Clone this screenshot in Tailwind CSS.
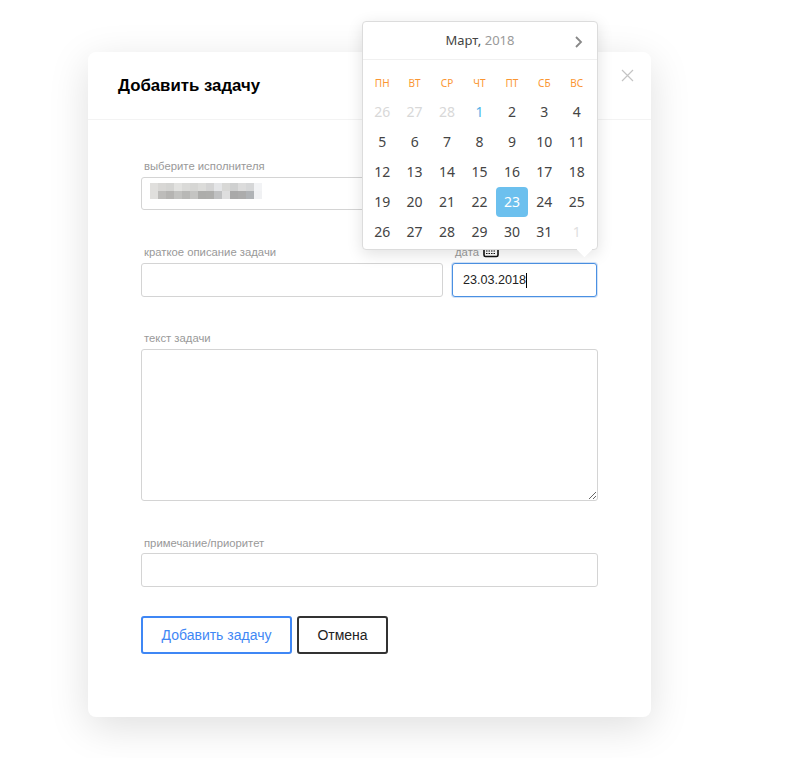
<!DOCTYPE html>
<html lang="ru">
<head>
<meta charset="utf-8">
<title>Добавить задачу</title>
<script src="https://cdn.jsdelivr.net/npm/@tailwindcss/browser@4"></script>
</head>
<body class="bg-white font-['Liberation_Sans',sans-serif]">
<div class="relative w-[808px] h-[758px] overflow-hidden pt-[52px] pl-[88px]">

  <!-- modal -->
  <div class="relative w-[563px] h-[665px] bg-white rounded-lg shadow-[0_10px_40px_rgba(0,0,0,0.13)]">
    <div class="h-[68px] border-b border-[#f3f3f3] pl-[30px] pt-[22px]">
      <h2 class="text-[16.8px] leading-[24px] font-bold text-black">Добавить задачу</h2>
    </div>
    <svg class="absolute left-[533px] top-[17px] w-[13px] h-[13px]" viewBox="0 0 13 13" fill="none" stroke="#c4c4c4" stroke-width="1.2"><path d="M1 1l11 11M12 1L1 12"/></svg>

    <div class="pl-[53px] w-[510px]">
      <!-- исполнитель -->
      <label class="block pt-[39px] pl-[3px] text-[11.3px] leading-[14px] text-[#999]">выберите исполнителя</label>
      <div class="mt-[4px] h-[33px] border border-[#d4d4d4] rounded-[3px] bg-white pl-[8px] pt-[5px]">
        <div class="blur-[0.6px]">
          <div class="flex h-[8px] w-[116px]">
            <i class="w-[8px] bg-[#e0dfdd]"></i><i class="w-[8px] bg-[#d8d7d5]"></i><i class="w-[8px] bg-[#d4d4d2]"></i><i class="w-[8px] bg-[#e2e2e0]"></i><i class="w-[8px] bg-[#dadad8]"></i><i class="w-[8px] bg-[#d6d6d4]"></i><i class="w-[8px] bg-[#dcdcda]"></i><i class="w-[8px] bg-[#d4d4d4]"></i><i class="w-[8px] bg-[#e4e5e7]"></i><i class="w-[8px] bg-[#d8d8d6]"></i><i class="w-[8px] bg-[#cfd0d0]"></i><i class="w-[8px] bg-[#dcdcdc]"></i><i class="w-[8px] bg-[#d6d7d8]"></i><i class="w-[8px] bg-[#f2f3f5]"></i>
          </div>
          <div class="flex h-[8px] w-[116px]">
            <i class="w-[8px] bg-[#e0dfdd]"></i><i class="w-[8px] bg-[#bdbcba]"></i><i class="w-[8px] bg-[#b5b4b2]"></i><i class="w-[8px] bg-[#c2c2c0]"></i><i class="w-[8px] bg-[#b8b8b6]"></i><i class="w-[8px] bg-[#c4c4c2]"></i><i class="w-[8px] bg-[#adadab]"></i><i class="w-[8px] bg-[#aeaeac]"></i><i class="w-[8px] bg-[#c0c1c2]"></i><i class="w-[8px] bg-[#dedede]"></i><i class="w-[8px] bg-[#a9a9a9]"></i><i class="w-[8px] bg-[#acacac]"></i><i class="w-[8px] bg-[#b0b3b6]"></i><i class="w-[8px] bg-[#f0f1f3]"></i>
          </div>
        </div>
      </div>

      <!-- описание + дата -->
      <div class="flex gap-[9px] mt-[35px]">
        <div class="w-[302px]">
          <label class="block pl-[3px] text-[11.3px] leading-[14px] text-[#999]">краткое описание задачи</label>
          <div class="mt-[4px] h-[34px] border border-[#d4d4d4] rounded-[3px] bg-white"></div>
        </div>
        <div class="w-[145px]">
          <label class="flex items-center gap-[4px] pl-[3px] text-[11.3px] leading-[14px] text-[#999]">дата
            <svg class="w-[16px] h-[12px]" viewBox="0 0 16 12" fill="none" stroke="#111"><rect x="1" y="1.5" width="14" height="9" rx="1.5" stroke-width="1.6"/><path d="M3 5h10M3 7.5h10" stroke-width="1.2" stroke-dasharray="1.5 1"/></svg>
          </label>
          <div class="mt-[4px] h-[34px] border border-[#4a90e2] rounded-[3px] bg-white shadow-[0_0_0_1px_rgba(74,144,226,0.25)] pl-[10px] flex items-center text-[12.6px] text-[#222]">23.03.2018<span class="w-px h-[15px] bg-black"></span></div>
        </div>
      </div>

      <!-- текст -->
      <label class="block mt-[34px] pl-[3px] text-[11.3px] leading-[14px] text-[#999]">текст задачи</label>
      <textarea class="block mt-[4px] w-[457px] h-[152px] border border-[#d4d4d4] rounded-[3px] bg-white outline-none"></textarea>

      <!-- примечание -->
      <label class="block mt-[35px] pl-[3px] text-[11.3px] leading-[14px] text-[#999]">примечание/приоритет</label>
      <div class="mt-[3px] w-[457px] h-[34px] border border-[#d4d4d4] rounded-[3px] bg-white"></div>

      <div class="flex gap-[5px] mt-[29px]">
        <button class="w-[151px] h-[38px] border-2 border-[#3f87f5] rounded-[3px] text-[14px] text-[#3f87f5]">Добавить задачу</button>
        <button class="w-[91px] h-[38px] border-2 border-[#333] rounded-[3px] text-[14px] text-[#222]">Отмена</button>
      </div>
    </div>
  </div>

  <!-- calendar popover -->
  <div class="absolute left-[362px] top-[21px] w-[236px] h-[229px] bg-white border border-[#dcdcdc] rounded-[4px] shadow-[0_4px_16px_rgba(0,0,0,0.12)] font-['Noto_Sans',sans-serif]">
    <div class="relative h-[38px] border-b border-[#f0f0f0] flex items-center justify-center text-[13px] text-[#444] pt-[1px]">
      <span>Март, <span class="text-[#999]">2018</span></span>
      <svg class="absolute right-[14px] top-[14px] w-[9px] h-[12px]" viewBox="0 0 9 12" fill="none" stroke="#888" stroke-width="1.8"><path d="M2 1l5 5-5 5"/></svg>
    </div>
    <div class="grid grid-cols-7 w-[227px] ml-[3px] mt-[8px] text-center">
      <span class="h-[29px] leading-[30px] text-[10px] text-[#fb9632]">ПН</span>
      <span class="h-[29px] leading-[30px] text-[10px] text-[#fb9632]">ВТ</span>
      <span class="h-[29px] leading-[30px] text-[10px] text-[#fb9632]">СР</span>
      <span class="h-[29px] leading-[30px] text-[10px] text-[#fb9632]">ЧТ</span>
      <span class="h-[29px] leading-[30px] text-[10px] text-[#fb9632]">ПТ</span>
      <span class="h-[29px] leading-[30px] text-[10px] text-[#fb9632]">СБ</span>
      <span class="h-[29px] leading-[30px] text-[10px] text-[#fb9632]">ВС</span>
    </div>
    <div class="grid grid-cols-7 auto-rows-[30px] w-[227px] ml-[3px] text-center text-[14px] leading-[30px] text-[#444]">
      <span class="text-[#d8d8d8]">26</span><span class="text-[#d8d8d8]">27</span><span class="text-[#d8d8d8]">28</span><span class="text-[#4fb3e8]">1</span><span>2</span><span>3</span><span>4</span>
      <span>5</span><span>6</span><span>7</span><span>8</span><span>9</span><span>10</span><span>11</span>
      <span>12</span><span>13</span><span>14</span><span>15</span><span>16</span><span>17</span><span>18</span>
      <span>19</span><span>20</span><span>21</span><span>22</span><span class="bg-[#6cc0ee] text-white rounded-[4px]">23</span><span>24</span><span>25</span>
      <span>26</span><span>27</span><span>28</span><span>29</span><span>30</span><span>31</span><span class="text-[#e0e0e0]">1</span>
    </div>
    <div class="absolute left-[216px] top-[222px] w-[11px] h-[11px] rotate-45 bg-white"></div>
  </div>
</div>
</body>
</html>
